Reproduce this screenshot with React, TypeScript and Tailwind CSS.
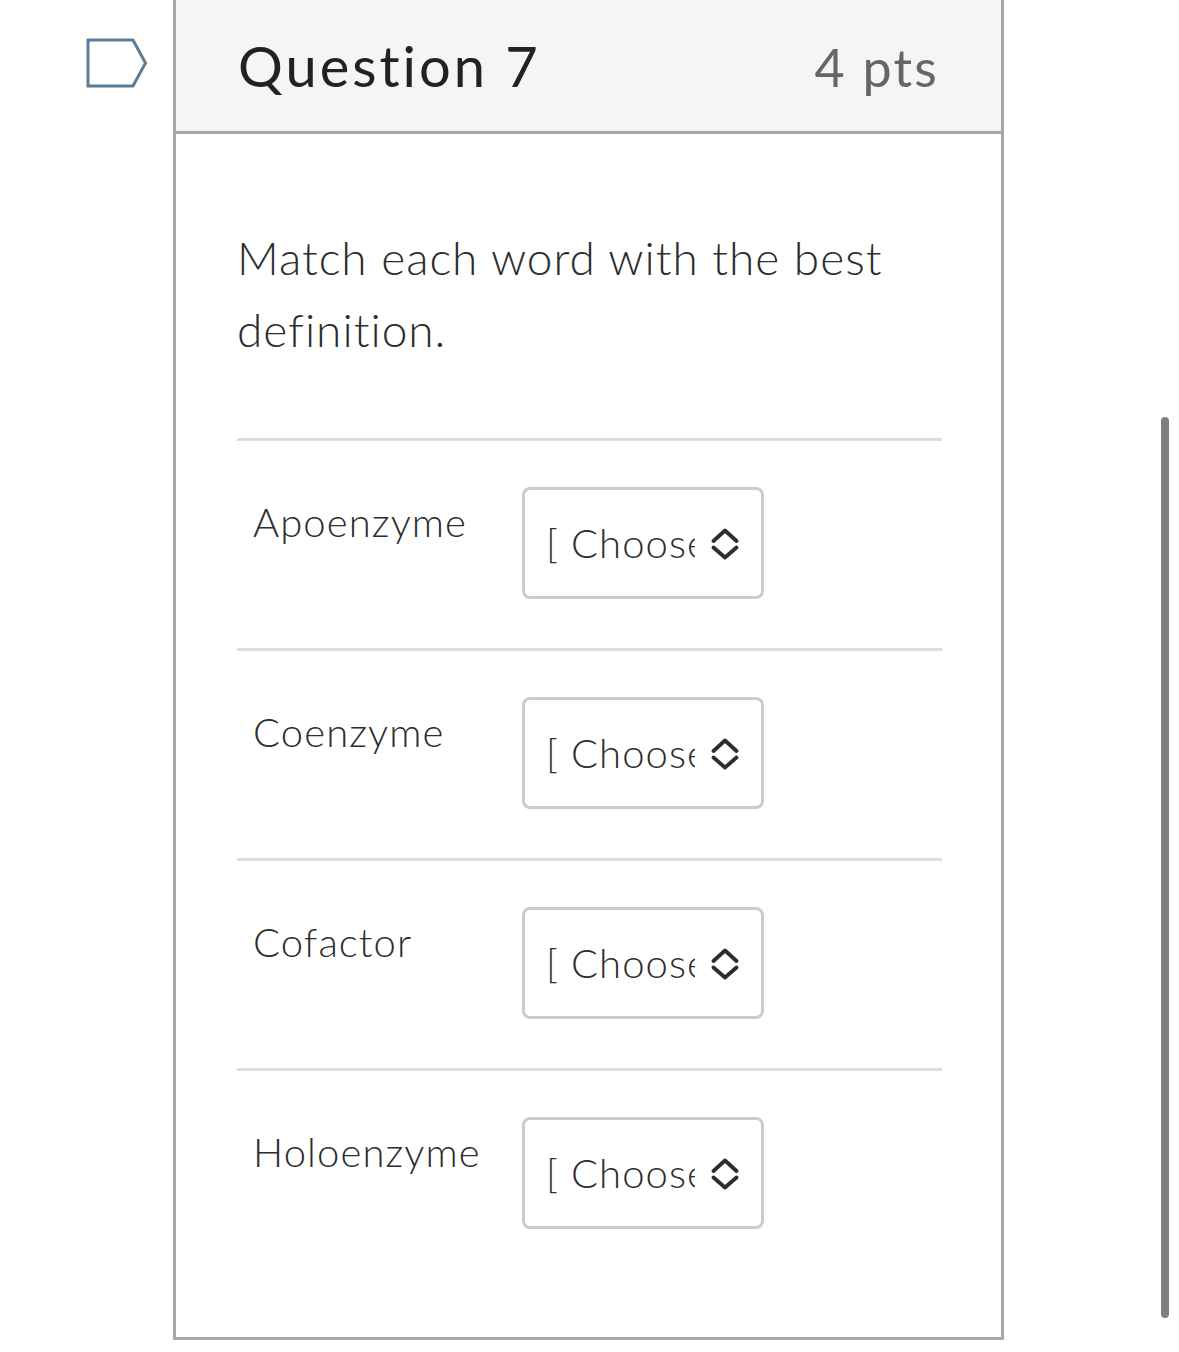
import React from 'react';

const rows = ['Apoenzyme', 'Coenzyme', 'Cofactor', 'Holoenzyme'];

function Chevrons() {
  return (
    <svg width="30" height="32" viewBox="0 0 30 32" fill="none" className="shrink-0">
      <path d="M3.5 13 L15 2.5 L26.5 13" stroke="#2d2d2d" strokeWidth="3.8" strokeLinecap="round" strokeLinejoin="round" />
      <path d="M3.5 19.5 L15 29.5 L26.5 19.5" stroke="#2d2d2d" strokeWidth="3.8" strokeLinecap="round" strokeLinejoin="round" />
    </svg>
  );
}

function MatchRow({ label }: { label: string }) {
  return (
    <div className="border-t-[3px] border-[#dddddd]">
      <div className="flex items-start h-[207px] pl-[16px]">
        <div className="w-[269px] pt-[57px] text-[40px] leading-[48px] font-light tracking-[1.1px] text-[#2d2d2d]">
          {label}
        </div>
        <div className="mt-[46px] w-[242px] h-[112px] border-[3px] border-[#cccccc] rounded-[8px] flex items-center pl-[21px]">
          <div className="w-[149px] overflow-hidden whitespace-nowrap text-[40px] leading-[48px] font-light tracking-[1.1px] text-[#2d2d2d]">
            [ Choose ]
          </div>
          <div className="ml-[15px] mt-[1px]">
            <Chevrons />
          </div>
        </div>
      </div>
    </div>
  );
}

export default function App() {
  return (
    <div className="relative w-[1179px] h-[1352px] bg-white overflow-hidden" style={{ fontFamily: 'Lato, "Noto Sans", sans-serif' }}>
      <div className="flex">
        <div className="w-[173px] shrink-0 pt-[38px] pl-[86px]">
          <svg width="62" height="50" viewBox="0 0 62 50" fill="none">
            <path d="M2 2 L47 2 L59.5 25 L47 48 L2 48 Z" stroke="#5b7d99" strokeWidth="3" />
          </svg>
        </div>
        <div className="w-[831px] shrink-0 border-x-[3px] border-b-[3px] border-[#a8a8a8]">
          <div className="h-[134px] bg-[#f5f5f5] border-b-[3px] border-[#a8a8a8] flex items-baseline justify-between pl-[62px] pr-[62px] pt-[32px]">
            <div className="text-[56px] leading-[1.2] tracking-[3px] text-[#222222]">Question 7</div>
            <div className="text-[52px] leading-[1.2] tracking-[2.2px] text-[#666666]">4 pts</div>
          </div>
          <div className="pl-[61px] pr-[59px] pb-[59px]">
            <p className="mt-[88px] mb-[72px] text-[46px] leading-[72px] font-light tracking-[1px] text-[#2d2d2d]">
              Match each word with the best definition.
            </p>
            {rows.map((r) => (
              <MatchRow key={r} label={r} />
            ))}
          </div>
        </div>
      </div>
      <div className="absolute left-[1161px] top-[417px] w-[8px] h-[901px] rounded-full bg-[#808080]" />
    </div>
  );
}
